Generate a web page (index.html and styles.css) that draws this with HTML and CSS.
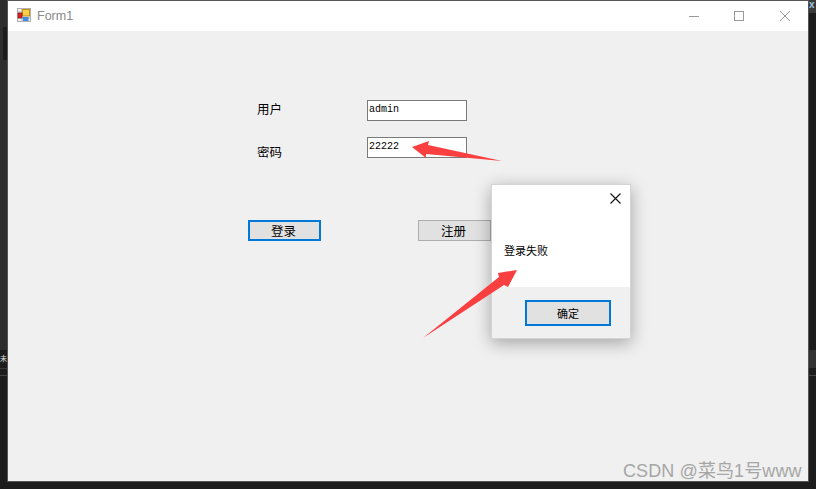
FILE: index.html
```html
<!DOCTYPE html>
<html lang="zh">
<head>
<meta charset="utf-8">
<title>Form1</title>
<link rel="stylesheet" href="styles.css">
</head>
<body>
<div class="edge-left">
  <i class="edge-dark"></i>
  <i class="edge-dark2"></i>
  <span class="edge-glyph">未</span>
</div>
<div class="edge-right">
  <span class="edge-x">x</span>
  <i class="edge-band"></i>
</div>
<main class="window">
  <header class="titlebar">
    <svg class="app-icon" width="14" height="14" viewBox="0 0 14 14">
      <rect x="0.5" y="0.5" width="13" height="13" fill="#f2f2f2" stroke="#b0b0b0"/>
      <path d="M5 0V14M0 4H5M0 10H14" stroke="#b0b0b0" fill="none"/>
      <rect x="5.5" y="1.5" width="7" height="6.5" fill="#f6cf4e" stroke="#c08f18"/>
      <rect x="1" y="5" width="4" height="5" fill="#d9262c" stroke="#8f1418" stroke-width="0.7"/>
      <rect x="6" y="9" width="5.5" height="4" fill="#3f8ae6"/>
    </svg>
    <span class="title">Form1</span>
    <div class="controls">
      <svg class="ctl-min" width="10" height="10" viewBox="0 0 10 10"><path d="M0 5.5H10" stroke="#999" fill="none"/></svg>
      <svg width="10" height="10" viewBox="0 0 10 10"><rect x="0.5" y="0.5" width="9" height="9" stroke="#999" fill="none"/></svg>
      <svg width="10" height="10" viewBox="0 0 10 10"><path d="M0 0L10 10M10 0L0 10" stroke="#999" fill="none"/></svg>
    </div>
  </header>
  <section class="form">
    <span class="label label-user">用户</span>
    <div class="field field-user">admin</div>
    <span class="label label-pass">密码</span>
    <div class="field field-pass">22222</div>
    <button class="btn btn-login">登录</button>
    <button class="btn btn-register">注册</button>
    <span class="watermark">CSDN @菜鸟1号www</span>
  </section>
</main>
<div class="dialog">
  <div class="dialog-body">
    <svg class="dialog-close" width="11" height="11" viewBox="0 0 11 11"><path d="M0.5 0.5L10.5 10.5M10.5 0.5L0.5 10.5" stroke="#111" stroke-width="1.1" fill="none"/></svg>
    <p class="dialog-text">登录失败</p>
  </div>
  <div class="dialog-foot"><button class="dialog-ok">确定</button></div>
</div>
<svg class="arrows" width="816" height="489" viewBox="0 0 816 489">
  <polygon points="412,147 429,141 428,145 502,161 426,154 426,158" fill="#f93f3f"/>
  <polygon points="517,270 498,273 499,277 423,338 504,285 508,287" fill="#f93f3f"/>
</svg>
</body>
</html>
```
FILE: styles.css
```css
html, body { margin: 0; padding: 0; }
body {
  position: relative;
  width: 816px;
  height: 489px;
  overflow: hidden;
  background: #1c1c1c;
  font-family: "Noto Sans CJK SC", "Liberation Sans", sans-serif;
  color: #000;
}
.edge-left {
  position: absolute;
  left: 0;
  top: 0;
  width: 7px;
  height: 489px;
  overflow: hidden;
  background: linear-gradient(#2d2d2d 0 350px, #1c1c1c 350px);
}
.edge-dark {
  position: absolute;
  left: 3px;
  top: 27px;
  width: 4px;
  height: 33px;
  background: #1c1c1c;
}
.edge-dark2 {
  position: absolute;
  left: 0;
  top: 368px;
  width: 7px;
  height: 8px;
  border-top: 1px solid #3a3a3a;
  border-bottom: 1px solid #454545;
  box-sizing: border-box;
}
.edge-glyph {
  position: absolute;
  left: 0;
  top: 351px;
  font-size: 7px;
  line-height: 14px;
  color: #e0e0e0;
}
.edge-right {
  position: absolute;
  right: 0;
  top: 0;
  width: 8px;
  height: 489px;
  overflow: hidden;
  background: linear-gradient(#3a3a3a 0 13px, #1c1c1c 13px 350px, #333 350px 368px, #1c1c1c 368px);
}
.edge-x {
  position: absolute;
  left: 1px;
  top: -1px;
  font-family: "Liberation Sans", sans-serif;
  font-weight: 700;
  font-size: 10px;
  line-height: 11px;
  color: #9fc4e6;
}
.edge-band {
  position: absolute;
  left: 0;
  top: 375px;
  width: 8px;
  height: 1px;
  background: #454545;
}
.window {
  position: absolute;
  left: 8px;
  top: 1px;
  width: 800px;
  height: 480px;
  display: flex;
  flex-direction: column;
  background: #f0f0f0;
  box-shadow: 0 0 0 1px #555;
}
.titlebar {
  height: 30px;
  flex: none;
  display: flex;
  align-items: center;
  background: #fff;
  padding-left: 9px;
}
.app-icon { flex: none; margin-top: -2px; }
.title {
  margin-left: 6px;
  margin-top: -1px;
  font-family: "Liberation Sans", sans-serif;
  font-size: 12.5px;
  color: #8a8a8a;
}
.controls {
  margin-left: auto;
  margin-right: 18px;
  display: flex;
  gap: 36px;
  align-items: center;
  margin-top: -1px;
}
.ctl-min { margin-right: -1px; }
.form { position: relative; flex: 1; }
.label { position: absolute; font-size: 12.5px; line-height: 16px; }
.label-user { left: 249px; top: 70px; }
.label-pass { left: 249px; top: 113px; }
.field {
  position: absolute;
  left: 359px;
  width: 97px;
  height: 19px;
  padding-left: 1px;
  background: #fff;
  border: 1px solid #7a7a7a;
  font-family: "Liberation Mono", monospace;
  font-size: 10px;
  line-height: 18px;
}
.field-user { top: 69px; }
.field-pass { top: 106px; }
.btn {
  position: absolute;
  top: 189px;
  width: 73px;
  height: 21px;
  padding: 0 2px 0 0;
  background: #e1e1e1;
  font-family: inherit;
  font-size: 12.5px;
  line-height: 16px;
  color: #000;
}
.btn-login { left: 240px; border: 2px solid #0078d7; }
.btn-register { left: 410px; border: 1px solid #adadad; }
.watermark {
  position: absolute;
  left: 615px;
  bottom: 0;
  font-family: "Liberation Sans", "Noto Sans CJK SC", sans-serif;
  font-size: 18px;
  line-height: 20px;
  letter-spacing: 0.1px;
  color: #a6a6a6;
  white-space: nowrap;
}
.dialog {
  position: absolute;
  left: 491px;
  top: 184px;
  width: 140px;
  height: 155px;
  box-sizing: border-box;
  display: flex;
  flex-direction: column;
  background: #f0f0f0;
  border: 1px solid #d4d4d4;
  box-shadow: 0 4px 16px rgba(0, 0, 0, 0.32);
}
.dialog-body { position: relative; height: 102px; background: #fff; }
.dialog-close { position: absolute; left: 118px; top: 8px; }
.dialog-text {
  position: absolute;
  left: 12px;
  top: 57px;
  margin: 0;
  font-size: 11px;
  line-height: 16px;
}
.dialog-foot { flex: 1; padding: 13px 19px 0 33px; }
.dialog-ok {
  display: block;
  width: 86px;
  height: 26px;
  padding: 0;
  background: #e1e1e1;
  border: 2px solid #0078d7;
  font-family: inherit;
  font-size: 11px;
  color: #000;
}
.arrows { position: absolute; left: 0; top: 0; pointer-events: none; }
```
